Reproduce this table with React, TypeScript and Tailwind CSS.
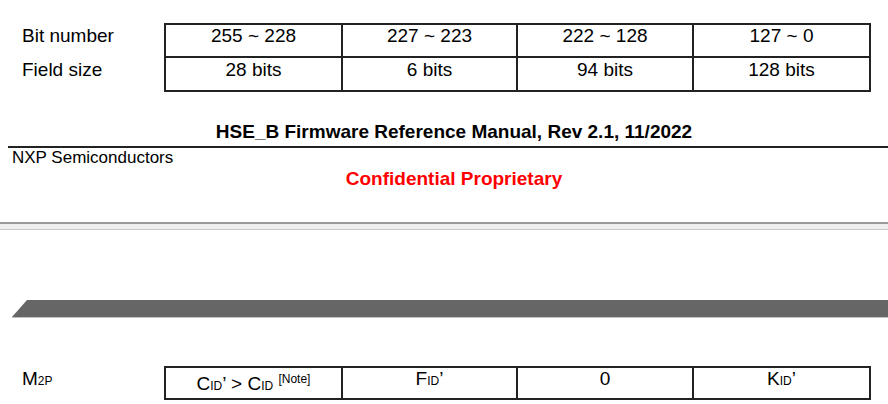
export default function App() {
  const cell = "flex justify-center text-[19px] leading-[22px] text-black";
  return (
    <div className="w-[888px] h-[404px] overflow-hidden bg-white text-black font-['Liberation_Sans',Arial,sans-serif]">
      {/* Page 1 */}
      <div className="h-[222px] flex flex-col">
        <div className="pt-[23px] flex">
          <div className="w-[164px] pl-[22px] pt-[2px] text-[19px] leading-[22px]">
            <div className="h-[33px]">Bit number</div>
            <div className="h-[34px] pt-[1px]">Field size</div>
          </div>
          <div className="w-[707px] border-2 border-[#222] grid grid-cols-[175px_175px_176px_177px]">
            <div className={`${cell} h-[31px]`}>255 ~ 228</div>
            <div className={`${cell} h-[31px] border-l-2 border-[#222]`}>227 ~ 223</div>
            <div className={`${cell} h-[31px] border-l-2 border-[#222]`}>222 ~ 128</div>
            <div className={`${cell} h-[31px] border-l-2 border-[#222]`}>127 ~ 0</div>
            <div className={`${cell} h-[34px] pt-[1px] border-t-2 border-[#222]`}>28 bits</div>
            <div className={`${cell} h-[34px] pt-[1px] border-t-2 border-l-2 border-[#222]`}>6 bits</div>
            <div className={`${cell} h-[34px] pt-[1px] border-t-2 border-l-2 border-[#222]`}>94 bits</div>
            <div className={`${cell} h-[34px] pt-[1px] border-t-2 border-l-2 border-[#222]`}>128 bits</div>
          </div>
        </div>
        <div className="mt-[29px] h-[22px] pl-[20px] text-center text-[19px] leading-[22px] font-bold">
          HSE_B Firmware Reference Manual, Rev 2.1, 11/2022
        </div>
        <div className="mt-[3px] ml-[8px] h-[2px] bg-[#222]" />
        <div className="mt-[1px] pl-[12px] h-[18px] text-[17px] leading-[18px]">NXP Semiconductors</div>
        <div className="mt-[1px] pl-[20px] h-[22px] text-center text-[19px] leading-[22px] font-bold text-[#ff0000]">
          Confidential Proprietary
        </div>
      </div>
      {/* Page break */}
      <div className="h-[2px] bg-[#9a9a9a]" />
      <div className="h-[5px] bg-[#eeeeee]" />
      <div className="h-[1px] bg-[#c8c8c8]" />
      {/* Page 2 */}
      <div className="flex flex-col">
        <svg className="mt-[70px] ml-[12px] block" width="876" height="18" viewBox="0 0 876 18">
          <polygon points="15,0 876,0 876,17 0,17" fill="#666666" />
          <line x1="0" y1="17.5" x2="876" y2="17.5" stroke="#c4c4c4" strokeWidth="1" />
        </svg>
        <div className="mt-[48px] flex">
          <div className="w-[164px] pl-[22px] pt-[2px] text-[19px] leading-[22px]">
            M<span className="text-[12px]">2P</span>
          </div>
          <div className="w-[707px] h-[34px] border-2 border-[#222] grid grid-cols-[175px_175px_176px_177px]">
            <div className={cell}>
              <span>
                C<span className="text-[12px]">ID</span>’ &gt; C<span className="text-[12px]">ID</span>{" "}
                <span className="text-[12px] align-[7px]">[Note]</span>
              </span>
            </div>
            <div className={`${cell} border-l-2 border-[#222]`}>
              <span>
                F<span className="text-[12px]">ID</span>’
              </span>
            </div>
            <div className={`${cell} border-l-2 border-[#222]`}>0</div>
            <div className={`${cell} border-l-2 border-[#222]`}>
              <span>
                K<span className="text-[12px]">ID</span>’
              </span>
            </div>
          </div>
        </div>
      </div>
    </div>
  );
}
